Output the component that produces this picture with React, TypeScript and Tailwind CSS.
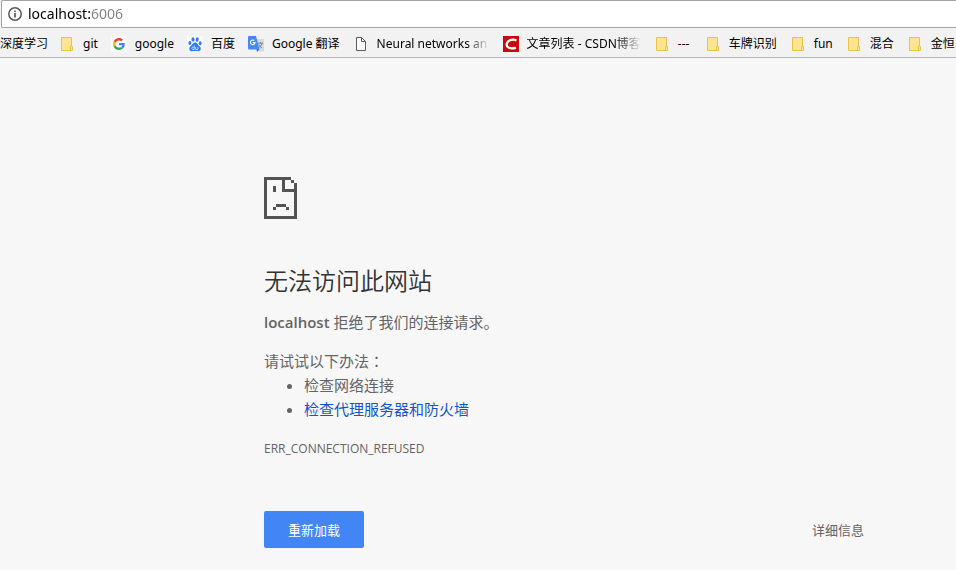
import React from "react";

function FolderIcon() {
  return (
    <svg width="16" height="16" viewBox="0 0 16 16" className="shrink-0" aria-hidden="true">
      <path d="M2.5 1.5h10v9h1v4h-11z" fill="#ffe591" stroke="#e9c34c" />
      <path d="M11.5 14v-3.500h1" fill="none" stroke="#e9c34c" />
    </svg>
  );
}

function GoogleIcon() {
  return (
    <span className="flex size-4 shrink-0 items-center justify-center bg-[#fafafa]">
      <svg width="12" height="12" viewBox="0 0 48 48" aria-hidden="true">
        <path fill="#ea4335" d="M24 9.500c3.540 0 6.710 1.220 9.210 3.600l6.850-6.850C35.900 2.380 30.470 0 24 0 14.620 0 6.510 5.380 2.560 13.220l7.980 6.190C12.430 13.720 17.740 9.500 24 9.500z" />
        <path fill="#4285f4" d="M46.980 24.550c0-1.570-.15-3.090-.38-4.550H24v9.020h12.940c-.58 2.960-2.260 5.480-4.780 7.180l7.730 6c4.510-4.180 7.090-10.360 7.090-17.650z" />
        <path fill="#fbbc05" d="M10.530 28.590a14.500 14.500 0 0 1 0-9.180l-7.980-6.190a24 24 0 0 0 0 21.560z" />
        <path fill="#34a853" d="M24 48c6.480 0 11.930-2.130 15.890-5.810l-7.730-6c-2.150 1.450-4.920 2.300-8.160 2.300-6.260 0-11.570-4.220-13.470-9.910l-7.980 6.190C6.510 42.620 14.620 48 24 48z" />
      </svg>
    </span>
  );
}

function BaiduIcon() {
  return (
    <svg width="16" height="16" viewBox="0 0 16 16" className="shrink-0" aria-hidden="true">
      <rect width="16" height="16" fill="#fafafa" />
      <g fill="#2f7cf6">
        <ellipse cx="2.900" cy="7" rx="1.500" ry="2" />
        <ellipse cx="6" cy="3.400" rx="1.500" ry="2.200" />
        <ellipse cx="10.200" cy="3.500" rx="1.500" ry="2.200" transform="rotate(10 10.200 3.500)" />
        <ellipse cx="13.200" cy="7.300" rx="1.400" ry="2" />
        <path d="M8 6.600c1.900 0 2.500 1.700 3.700 2.900 1.300 1.200 2.300 2 2 3.700-.3 1.900-2 2.200-3.500 1.900-1.500-.2-2.900-.2-4.400 0-1.500.3-3.200 0-3.500-1.900-.2-1.700.8-2.500 2-3.700C5.500 8.300 6.100 6.600 8 6.600z" />
      </g>
      <path d="M7.200 9.500v4H5.800c-1.300 0-1.300-2.300 0-2.300h1.400M8.700 11v2.500h2.200V11" fill="none" stroke="#dce9ff" strokeWidth=".8" />
    </svg>
  );
}

function TranslateIcon() {
  return (
    <svg width="16" height="16" viewBox="0 0 16 16" className="shrink-0" aria-hidden="true">
      <path d="M6 3h10v12.500H9z" fill="#d7d9dc" />
      <path d="M10 7.200h5M12.300 6v1.200M14 7.500c-.5 2-2 3.600-3.600 4.200M10.800 8.500c.6 1.600 2 2.900 3.300 3.400" fill="none" stroke="#71828c" />
      <path d="M8.500 13h3l-2.500 3z" fill="#3a5bc7" />
      <path d="M1 0h7l3.500 13.500H1a1 1 0 0 1-1-1V1a1 1 0 0 1 1-1z" fill="#4688f4" />
      <path d="M6.300 4.700A2.300 2.300 0 1 0 7 6.600H4.700" fill="none" stroke="#fff" strokeWidth="1.100" />
    </svg>
  );
}

function PageIcon() {
  return (
    <svg width="16" height="16" viewBox="0 0 16 16" className="shrink-0" aria-hidden="true">
      <path d="M3.500 1.500h5l4 4v9h-9z" fill="#fafafa" stroke="#5a5a5a" />
      <path d="M8.500 1.500v4h4" fill="none" stroke="#5a5a5a" />
    </svg>
  );
}

function CsdnIcon() {
  return (
    <svg width="16" height="16" viewBox="0 0 16 16" className="shrink-0" aria-hidden="true">
      <rect width="16" height="16" fill="#c80a0e" />
      <path d="M13.500 4.300C8.500 2.700 4.300 4.500 3.700 8.200c-.5 3.400 3.200 5 9.200 3.600" fill="none" stroke="#fff" strokeWidth="2.300" />
    </svg>
  );
}

function SadPageIcon() {
  return (
    <svg width="33" height="42" viewBox="0 0 33 42" fill="#535353" shapeRendering="crispEdges" aria-hidden="true">
      <path d="M0 0h27v3H3v36h27V15H18V3h3v9h9V6h3v36H0z" />
      <path d="M27 3h3v3h-3zM9 9h3v6H9zM12 27h10v3H12zM9 30h3v3H9zM22 30h3v3h-3z" />
    </svg>
  );
}

type Bookmark = { label: string; icon: React.ReactNode; style?: string };

const fade =
  "min-w-[113px] [mask-image:linear-gradient(to_right,black_calc(100%-24px),transparent)]";

const bookmarks: Bookmark[] = [
  { label: "git", icon: <FolderIcon /> },
  { label: "google", icon: <GoogleIcon /> },
  { label: "百度", icon: <BaiduIcon /> },
  { label: "Google 翻译", icon: <TranslateIcon /> },
  { label: "Neural networks an", icon: <PageIcon />, style: fade },
  { label: "文章列表 - CSDN博客", icon: <CsdnIcon />, style: fade },
  { label: "---", icon: <FolderIcon />, style: "min-w-3.5" },
  { label: "车牌识别", icon: <FolderIcon /> },
  { label: "fun", icon: <FolderIcon /> },
  { label: "混合", icon: <FolderIcon /> },
  { label: "金恒", icon: <FolderIcon /> },
];

export default function App() {
  return (
    <div className="min-h-screen overflow-hidden bg-[#f7f7f7] font-['Noto_Sans','Noto_Sans_CJK_SC',sans-serif] text-[#646464]">
      <header className="border-b border-[#b6b6b6] bg-[#f2f2f2]">
        <div className="ml-px flex h-7 items-center gap-[5px] rounded-l-xs border border-r-0 border-[#a5a5a5] bg-white pl-[5px]">
          <svg width="16" height="16" viewBox="0 0 16 16" fill="none" stroke="#5a5a5a" className="shrink-0" aria-hidden="true">
            <circle cx="8" cy="8" r="6.200" strokeWidth="1.500" />
            <path d="M8 7v4.500M8 4.500V6" strokeWidth="1.700" />
          </svg>
          <input
            aria-label="地址"
            defaultValue="localhost:6006"
            className="min-w-0 flex-1 bg-[linear-gradient(to_right,black_63px,#808080_63px)] bg-clip-text text-sm text-transparent caret-black outline-none"
          />
        </div>
        <nav aria-label="书签" className="flex h-[29px] items-center gap-3 overflow-hidden pt-0.5 text-xs whitespace-nowrap text-black">
          <a href="#deep-learning" className="w-[47px] shrink-0">深度学习</a>
          <div className="flex items-center gap-[13px]">
            {bookmarks.map((b) => (
              <a key={b.label} href="#bookmark" className="flex shrink-0 items-center gap-2">
                {b.icon}
                <span className={b.style}>{b.label}</span>
              </a>
            ))}
          </div>
        </nav>
      </header>

      <main className="mr-4 ml-66 max-w-[600px] pt-[119px] text-[15px] leading-6">
        <SadPageIcon />
        <h1 className="mt-11 text-2xl leading-9 font-[350] text-[#333]">无法访问此网站</h1>
        <p className="mt-[11px]">
          <strong className="font-['Open_Sans',sans-serif] font-semibold">localhost</strong> 拒绝了我们的连接请求。
        </p>
        <p className="mt-[15px]">
          请试试以下办法<span className="font-['Noto_Sans_CJK_TC',sans-serif]" lang="zh-Hant">：</span>
        </p>
        <ul className="list-disc pl-10">
          <li>检查网络连接</li>
          <li>
            <a href="#proxy" className="text-[#1155cc]">检查代理服务器和防火墙</a>
          </li>
        </ul>
        <p className="mt-4 font-['Open_Sans',sans-serif] text-xs leading-6">ERR_CONNECTION_REFUSED</p>
        <div className="mt-[50px] flex items-center justify-between text-[13px]">
          <button type="button" className="h-[37px] w-25 rounded-xs bg-[#4285f4] text-white">
            重新加载
          </button>
          <button type="button">详细信息</button>
        </div>
      </main>
    </div>
  );
}
